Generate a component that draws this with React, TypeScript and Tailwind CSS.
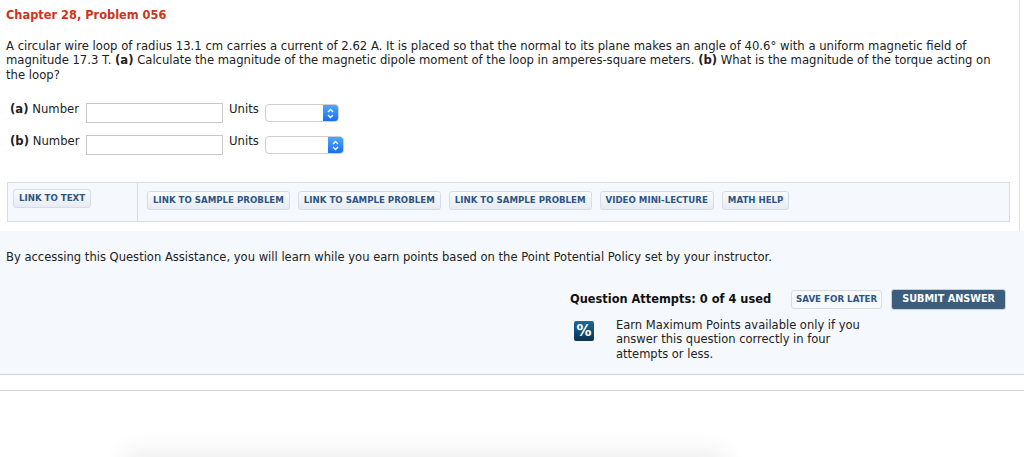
const font = { fontFamily: '"DejaVu Sans", Verdana, sans-serif' };

function LinkButton({ label }: { label: string }) {
  return (
    <span className="inline-flex items-center h-[19px] px-[5px] rounded-[3px] border border-[#d5dde6] bg-gradient-to-b from-[#f9fbfd] to-[#e6ecf3] text-[8.63px] font-bold text-[#2e5484] whitespace-nowrap">
      {label}
    </span>
  );
}

function AnswerRow({ part, selectWidth }: { part: string; selectWidth: string }) {
  return (
    <div className="flex items-start h-[32px] shrink-0">
      <span className="w-[76px] pl-[4px] -mt-[1px] leading-[14px] text-[#222] whitespace-nowrap">
        <b>({part})</b> Number
      </span>
      <span className="w-[137px] h-[20px] ml-[4px] bg-white border border-[#c6c9cc]" />
      <span className="ml-[6px] w-[36px] -mt-[1px] leading-[14px] text-[#222]">Units</span>
      <span className={`flex justify-end h-[18px] mt-[1px] ${selectWidth} rounded-[4px] border border-[#cfcfcf] bg-white overflow-hidden`}>
        <span className="flex items-center justify-center h-full w-[15px] bg-gradient-to-b from-[#50a6fb] to-[#1670ee]">
          <svg width="7" height="11" viewBox="0 0 7 11" fill="none" stroke="#fff" strokeWidth="1.3">
            <path d="M1 4 L3.5 1.5 L6 4" />
            <path d="M1 7 L3.5 9.5 L6 7" />
          </svg>
        </span>
      </span>
    </div>
  );
}

export default function App() {
  return (
    <div className="h-[457px] w-[1024px] flex flex-col overflow-hidden bg-white text-[11.65px] text-[#222]" style={font}>
      <div className="h-[232px] shrink-0 pl-[6px] pr-[14px] mr-[4px] border-r border-b border-[#dfe3e8]">
        <h2 className="pt-[8px] text-[11.4px] leading-[14px] font-bold text-[#d0331a]">Chapter 28, Problem 056</h2>
        <p className="mt-[17px] leading-[14.4px] whitespace-nowrap">
          A circular wire loop of radius 13.1 cm carries a current of 2.62 A. It is placed so that the normal to its plane makes an angle of 40.6° with a uniform magnetic field of
          <br />
          <span className="tracking-[-0.02px]">
            magnitude 17.3 T. <b>(a)</b> Calculate the magnitude of the magnetic dipole moment of the loop in amperes-square meters. <b>(b)</b> What is the magnitude of the torque acting on
          </span>
          <br />
          the loop?
        </p>
        <div className="mt-[21px]">
          <AnswerRow part="a" selectWidth="w-[74px]" />
          <AnswerRow part="b" selectWidth="w-[79px]" />
        </div>
        <div className="flex h-[40px] mt-[15px] ml-[1px] w-[1003px] border border-[#d5dce4] bg-[#f5f8fc]">
          <div className="w-[130px] border-r border-[#d5dce4] pl-[5px] pt-[6px]">
            <LinkButton label="LINK TO TEXT" />
          </div>
          <div className="flex gap-[8px] pl-[9px] pt-[8px]">
            <LinkButton label="LINK TO SAMPLE PROBLEM" />
            <LinkButton label="LINK TO SAMPLE PROBLEM" />
            <LinkButton label="LINK TO SAMPLE PROBLEM" />
            <LinkButton label="VIDEO MINI-LECTURE" />
            <LinkButton label="MATH HELP" />
          </div>
        </div>
      </div>

      <div className="flex flex-col h-[144px] shrink-0 -mt-[1px] bg-[#f5f8fc] border-b border-[#cdd3dc]">
        <p className="pl-[6px] pt-[19px] text-[11.55px] leading-[14px]">
          By accessing this Question Assistance, you will learn while you earn points based on the Point Potential Policy set by your instructor.
        </p>
        <div className="ml-[570px] mt-[25px] flex items-center">
          <span className="w-[221px] text-[11.4px] font-bold text-[#111] whitespace-nowrap">Question Attempts: 0 of 4 used</span>
          <span className="flex items-center h-[19px] px-[4px] rounded-[3px] border border-[#d5dde6] bg-[#f7f9fb] text-[8.7px] font-bold text-[#2e5484] whitespace-nowrap">SAVE FOR LATER</span>
          <span className="ml-[9px] flex items-center h-[21px] px-[10px] rounded-[3px] border border-[#c8d2de] bg-[#3c5d7c] text-[9.7px] font-bold text-white whitespace-nowrap">SUBMIT ANSWER</span>
        </div>
        <div className="ml-[574px] mt-[8px] flex">
          <span className="flex items-center justify-center w-[20px] h-[20px] mt-[3px] rounded-[2px] bg-gradient-to-b from-[#1d6b9c] to-[#0b3350] text-[15px] font-bold text-white">%</span>
          <p className="ml-[22px] text-[11.5px] leading-[14.4px] whitespace-nowrap">
            Earn Maximum Points available only if you
            <br />
            answer this question correctly in four
            <br />
            attempts or less.
          </p>
        </div>
      </div>

      <div className="h-[16px] shrink-0 bg-white border-b border-[#cdd3dc]" />

      <div className="flex-1 min-h-0 bg-white">
        <div className="w-[590px] h-[40px] mt-[66px] ml-[130px] bg-[#eeeeee] shadow-[0_0_24px_6px_#eeeeee]" />
      </div>
    </div>
  );
}
